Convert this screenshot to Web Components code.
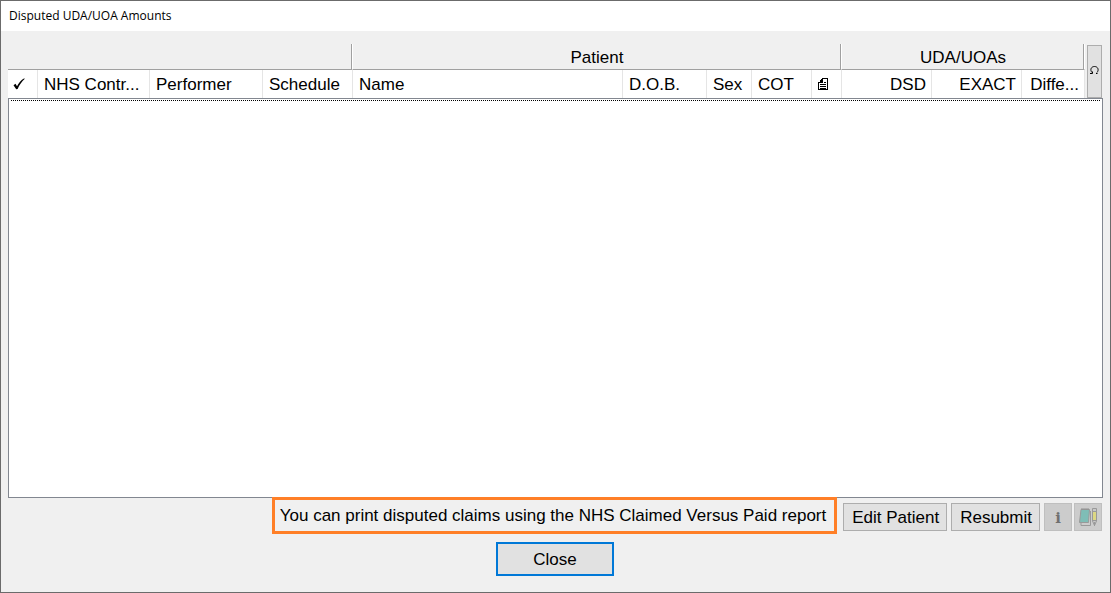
<!DOCTYPE html>
<html lang="en">
<head>
<meta charset="utf-8">
<title>Disputed UDA/UOA Amounts</title>
<style>
  body {
    margin: 0;
    font-family: "Liberation Sans", Arial, sans-serif;
    font-size: 17px;
    line-height: 20px;
    color: #000;
  }
</style>
</head>
<body>
<dialog-window caption="Disputed UDA/UOA Amounts">
  <claims-list></claims-list>
  <action-bar slot="actions">
    <hint-box>You can print disputed claims using the NHS Claimed Versus Paid report</hint-box>
    <push-button>Edit Patient</push-button>
    <push-button>Resubmit</push-button>
    <tool-pair slot="tools"></tool-pair>
  </action-bar>
  <push-button slot="footer" kind="default">Close</push-button>
</dialog-window>

<script>
class DialogWindow extends HTMLElement {
  constructor() {
    super();
    this.attachShadow({ mode: "open" });
  }

  connectedCallback() {
    this.shadowRoot.innerHTML = `
      <style>
        :host {
          display: flex;
          flex-direction: column;
          box-sizing: border-box;
          min-height: 100vh;
          border: 1px solid #6b6b6b;
          background: #f0f0f0;
        }

        h1 {
          margin: 0;
          padding: 0 8px;
          background: #fff;
          font: 12px/30px "Open Sans", "Noto Sans", sans-serif;
        }

        main {
          flex: 1;
          display: flex;
          flex-direction: column;
          padding: 13px 7px 0;
        }

        footer {
          display: flex;
          justify-content: center;
          padding: 8px 2px 16px 0;
        }
      </style>
      <h1>${this.getAttribute("caption")}</h1>
      <main>
        <slot></slot>
        <slot name="actions"></slot>
      </main>
      <footer><slot name="footer"></slot></footer>
    `;
  }
}

class ClaimsList extends HTMLElement {
  constructor() {
    super();
    this.attachShadow({ mode: "open" });
  }

  connectedCallback() {
    this.shadowRoot.innerHTML = `
      <style>
        :host {
          flex: 1;
          display: flex;
          flex-direction: column;
        }

        .head {
          display: flex;
          gap: 2px;
          padding-right: 1px;
        }

        table {
          flex: 1;
          min-width: 0;
          table-layout: fixed;
          border-spacing: 0;
        }

        th {
          box-sizing: border-box;
          padding: 0 6px;
          font-weight: normal;
          text-align: left;
          white-space: nowrap;
          overflow: hidden;
        }

        .groups th {
          height: 26px;
          padding-top: 2px;
          text-align: center;
          border-right: 1px solid #fff;
          border-bottom: 1px solid #a0a0a0;
          box-shadow: inset -1px 0 #a0a0a0;
        }

        .columns th {
          height: 28px;
          padding-top: 2px;
          background: #fff;
          border-right: 1px solid #e5e5e5;
        }

        .columns th.number {
          padding-right: 5px;
          text-align: right;
        }

        .columns th.icon {
          padding: 0 5px;
        }

        th svg {
          display: block;
        }

        .w30 { width: 30px; }
        .w45 { width: 45px; }
        .w60 { width: 60px; }
        .w63 { width: 63px; }
        .w84 { width: 84px; }
        .w90 { width: 90px; }
        .w112 { width: 112px; }
        .w113 { width: 113px; }

        .refresh {
          display: flex;
          align-items: center;
          justify-content: center;
          width: 15px;
          margin-top: 1px;
          padding: 0 0 2px;
          border: 1px solid #adadad;
          background: #e1e1e1;
        }

        .rows {
          flex: 1;
          padding: 1px 2px;
          border: 1px solid #828790;
          background: #fff;
        }

        .focus {
          border-top: 1px dotted #000;
        }
      </style>
      <div class="head">
        <table>
          <colgroup>
            <col class="w30"><col class="w112"><col class="w113"><col class="w90">
            <col>
            <col class="w84"><col class="w45"><col class="w60"><col class="w30">
            <col class="w90"><col class="w90"><col class="w63">
          </colgroup>
          <thead>
            <tr class="groups">
              <th colspan="4"></th>
              <th colspan="5" scope="colgroup">Patient</th>
              <th colspan="3" scope="colgroup">UDA/UOAs</th>
            </tr>
            <tr class="columns">
              <th scope="col" class="icon">
                <svg width="12" height="14" viewBox="0 0 12 14" aria-hidden="true">
                  <path d="M0.500 8.200L2.500 6.800L4 9.200C5.600 6 8 3 11.300 1.200L11.600 2C8.800 4.400 6.400 8 4.600 12L3.200 12.300Z"/>
                </svg>
              </th>
              <th scope="col">NHS Contr...</th>
              <th scope="col">Performer</th>
              <th scope="col">Schedule</th>
              <th scope="col">Name</th>
              <th scope="col">D.O.B.</th>
              <th scope="col">Sex</th>
              <th scope="col">COT</th>
              <th scope="col" class="icon">
                <svg width="11" height="14" viewBox="0 0 11 14" fill="none" stroke="#000" aria-hidden="true" shape-rendering="crispEdges">
                  <path d="M4.500 1.500H10.500V12.500H1.500V4.500M5.500 1V5.500H2M3.500 3V5M4.500 2V5M7 5.500H9M3 7.500H9M3 9.500H9M3 11H9"/>
                </svg>
              </th>
              <th scope="col" class="number">DSD</th>
              <th scope="col" class="number">EXACT</th>
              <th scope="col" class="number">Diffe...</th>
            </tr>
          </thead>
        </table>
        <button class="refresh" type="button" aria-label="Refresh">
          <svg width="9" height="12" viewBox="0 0 9 12" fill="none" stroke="#000" aria-hidden="true">
            <path d="M2 7.500C-0.300 4.800 1.200 1.500 4.500 1.500C7.800 1.500 9.300 4.800 7 7.500"/>
            <path d="M0 8.500H2.500V6.500M6 8.500H7.500"/>
          </svg>
        </button>
      </div>
      <div class="rows"><div class="focus"></div></div>
    `;
  }
}

class ActionBar extends HTMLElement {
  constructor() {
    super();
    this.attachShadow({ mode: "open" });
  }

  connectedCallback() {
    this.shadowRoot.innerHTML = `
      <style>
        :host {
          display: flex;
          justify-content: flex-end;
          align-items: center;
          gap: 4px;
          margin-top: -1px;
          padding-right: 1px;
        }

        ::slotted(push-button),
        ::slotted(tool-pair) {
          margin-top: 2px;
        }
      </style>
      <slot></slot>
      <slot name="tools"></slot>
    `;
  }
}

class HintBox extends HTMLElement {
  constructor() {
    super();
    this.attachShadow({ mode: "open" });
  }

  connectedCallback() {
    this.shadowRoot.innerHTML = `
      <style>
        :host {
          display: block;
          margin-right: 2px;
          padding: 6px 8px 5px 5px;
          border: 3px solid #ff7f27;
        }
      </style>
      <slot></slot>
    `;
  }
}

class PushButton extends HTMLElement {
  constructor() {
    super();
    this.attachShadow({ mode: "open" });
  }

  connectedCallback() {
    this.shadowRoot.innerHTML = `
      <style>
        :host {
          display: block;
        }

        button {
          display: block;
          height: 28px;
          padding: 2px 7px 0 8px;
          border: 1px solid #adadad;
          background: #e1e1e1;
          color: inherit;
          font: inherit;
          white-space: nowrap;
        }

        :host([kind="default"]) button {
          min-width: 118px;
          height: 34px;
          border: 2px solid #0078d7;
        }
      </style>
      <button type="button"><slot></slot></button>
    `;
  }
}

class ToolPair extends HTMLElement {
  constructor() {
    super();
    this.attachShadow({ mode: "open" });
  }

  connectedCallback() {
    this.shadowRoot.innerHTML = `
      <style>
        :host {
          display: flex;
          gap: 2px;
        }

        button {
          display: flex;
          align-items: center;
          justify-content: center;
          width: 28px;
          height: 28px;
          padding: 2px 0 0;
          border: 1px solid #bfbfbf;
          background: #ccc;
          color: #707070;
          font: bold 15px/20px "DejaVu Serif", serif;
        }

        button + button {
          padding: 0;
        }
      </style>
      <button type="button" disabled aria-label="Information">i</button>
      <button type="button" disabled aria-label="Notes">
        <svg width="20" height="20" viewBox="0 0 20 20" aria-hidden="true">
          <path d="M3 16V18.500H12.500V4" fill="none" stroke="#999"/>
          <path d="M3 2.500H11.500L10.500 15.500H1.500Z" fill="#7fbdb6" stroke="#999"/>
          <path d="M4 1V3M6 1V3M8 1V3M10 1V3" stroke="#909090"/>
          <path d="M14.500 1.500H18.500V14L16.500 18.500L14.500 14Z" fill="#c8c8c8" stroke="#999"/>
          <path d="M15 5H18V13H15Z" fill="#dcd783"/>
          <path d="M14 4.500H19M14 13.500H19M16.500 15V19" stroke="#999"/>
        </svg>
      </button>
    `;
  }
}

customElements.define("dialog-window", DialogWindow);
customElements.define("claims-list", ClaimsList);
customElements.define("action-bar", ActionBar);
customElements.define("hint-box", HintBox);
customElements.define("push-button", PushButton);
customElements.define("tool-pair", ToolPair);
</script>
</body>
</html>
